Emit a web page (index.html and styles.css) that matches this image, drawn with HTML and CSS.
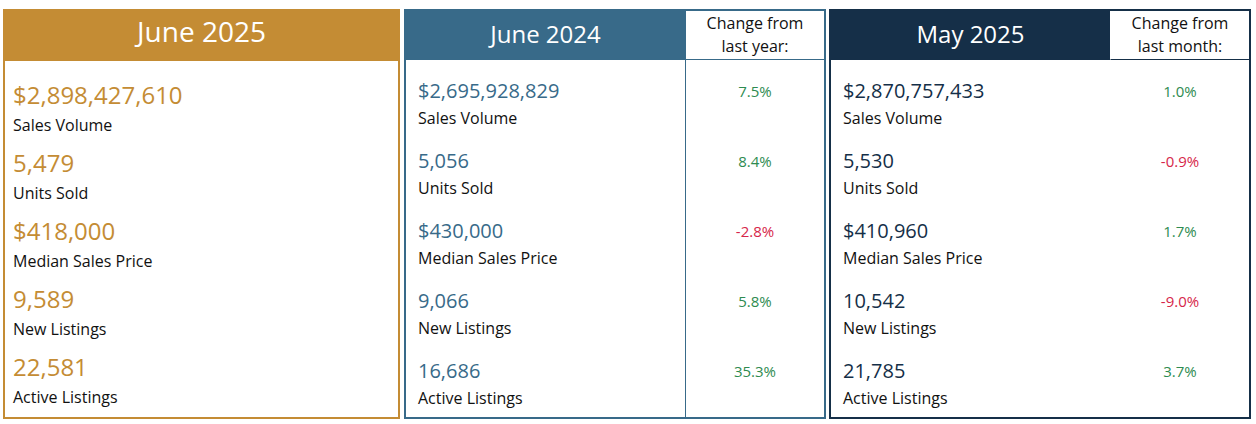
FILE: index.html
```html
<!DOCTYPE html>
<html lang="en">
<head>
<meta charset="utf-8">
<title>Market Summary</title>
<link rel="stylesheet" href="styles.css">
</head>
<body>
<div class="board">
  <section class="panel panel-current">
    <div class="title">June 2025</div>
    <div class="metrics">
      <div class="metric"><div class="value">$2,898,427,610</div><div class="label">Sales Volume</div></div>
      <div class="metric"><div class="value">5,479</div><div class="label">Units Sold</div></div>
      <div class="metric"><div class="value">$418,000</div><div class="label">Median Sales Price</div></div>
      <div class="metric"><div class="value">9,589</div><div class="label">New Listings</div></div>
      <div class="metric"><div class="value">22,581</div><div class="label">Active Listings</div></div>
    </div>
  </section>

  <section class="panel panel-compare panel-year">
    <div class="head">
      <div class="title">June 2024</div>
      <div class="change-head">Change from<br>last year:</div>
    </div>
    <div class="body">
      <div class="metrics">
        <div class="metric"><div class="value">$2,695,928,829</div><div class="label">Sales Volume</div></div>
        <div class="metric"><div class="value">5,056</div><div class="label">Units Sold</div></div>
        <div class="metric"><div class="value">$430,000</div><div class="label">Median Sales Price</div></div>
        <div class="metric"><div class="value">9,066</div><div class="label">New Listings</div></div>
        <div class="metric"><div class="value">16,686</div><div class="label">Active Listings</div></div>
      </div>
      <div class="changes">
        <div class="change up">7.5%</div>
        <div class="change up">8.4%</div>
        <div class="change down">-2.8%</div>
        <div class="change up">5.8%</div>
        <div class="change up">35.3%</div>
      </div>
    </div>
  </section>

  <section class="panel panel-compare panel-month">
    <div class="head">
      <div class="title">May 2025</div>
      <div class="change-head">Change from<br>last month:</div>
    </div>
    <div class="body">
      <div class="metrics">
        <div class="metric"><div class="value">$2,870,757,433</div><div class="label">Sales Volume</div></div>
        <div class="metric"><div class="value">5,530</div><div class="label">Units Sold</div></div>
        <div class="metric"><div class="value">$410,960</div><div class="label">Median Sales Price</div></div>
        <div class="metric"><div class="value">10,542</div><div class="label">New Listings</div></div>
        <div class="metric"><div class="value">21,785</div><div class="label">Active Listings</div></div>
      </div>
      <div class="changes">
        <div class="change up">1.0%</div>
        <div class="change down">-0.9%</div>
        <div class="change up">1.7%</div>
        <div class="change down">-9.0%</div>
        <div class="change up">3.7%</div>
      </div>
    </div>
  </section>
</div>
</body>
</html>
```
FILE: styles.css
```css
* { box-sizing: border-box; }

body {
  margin: 0;
  background: #ffffff;
  font-family: "Open Sans", "Noto Sans", sans-serif;
  color: #111111;
}

.board {
  display: flex;
  gap: 3px;
  padding: 9px 0 0 3px;
}

.panel {
  height: 410px;
  border: 2px solid var(--accent);
  display: flex;
  flex-direction: column;
}

/* ---------- current month panel ---------- */
.panel-current {
  --accent: #c48c34;
  width: 397px;
  margin-right: 1px;
}

.panel-current .title {
  height: 50px;
  background: var(--accent);
  color: #ffffff;
  font-size: 28px;
  line-height: 40px;
  padding-bottom: 10px;
  text-align: center;
}

.panel-current .metrics {
  display: flex;
  flex-direction: column;
  gap: 11px;
  padding: 18px 8px 0;
}

.panel-current .value {
  font-size: 24px;
  line-height: 32px;
  color: var(--accent);
}

.panel-current .label {
  margin-top: 3px;
}

.label {
  font-size: 16px;
  line-height: 22px;
  color: #111111;
}

/* ---------- comparison panels ---------- */
.panel-compare {
  width: 422px;
}

.panel-year { --accent: #386a89; --line: #386a89; }
.panel-month { --accent: #152f48; --line: transparent; }

.head {
  display: grid;
  grid-template-columns: 279px 1fr;
  height: 49px;
}

.head .title {
  background: var(--accent);
  color: #ffffff;
  font-size: 24px;
  line-height: 45px;
  padding-bottom: 4px;
  text-align: center;
}

.change-head {
  border-left: 1px solid var(--line);
  border-bottom: 1px solid var(--accent);
  padding-top: 1px;
  font-size: 16px;
  line-height: 23px;
  text-align: center;
  color: #111111;
}

.body {
  flex: 1;
  display: grid;
  grid-template-columns: 279px 1fr;
}

.body .metrics,
.changes {
  display: flex;
  flex-direction: column;
  gap: 19px;
  padding-top: 17px;
}

.body .metrics {
  padding-left: 12px;
}

.body .metric {
  height: 51px;
}

.body .value {
  font-size: 20px;
  line-height: 28px;
  color: var(--accent);
}

.body .label {
  margin-top: 2px;
}

.changes {
  border-left: 1px solid var(--line);
}

.change {
  height: 51px;
  font-size: 15px;
  line-height: 28px;
  text-align: center;
}

.change.up { color: #2e8b50; }
.change.down { color: #d6264a; }
```
